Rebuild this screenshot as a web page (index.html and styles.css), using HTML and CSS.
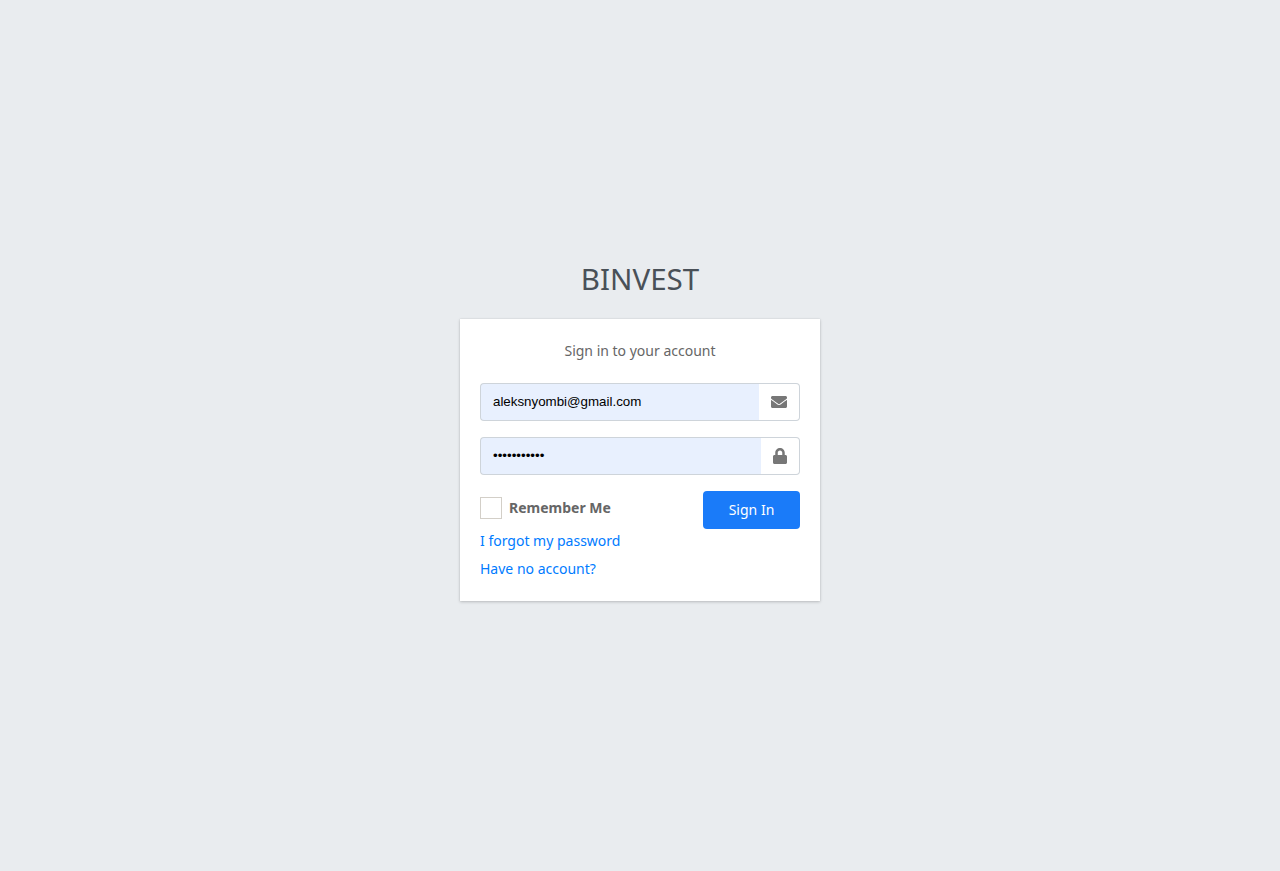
FILE: index.html
```html
<!DOCTYPE html>
<html lang="en">
<head>
    <meta charset="UTF-8">
    <meta name="viewport" content="width=device-width, initial-scale=1.0">
    <title>BINVEST | Log in</title>
    <link rel="stylesheet" href="styles.css">
</head>
<body class="login-page">
    <div class="login-box">
        <div class="login-logo">BINVEST</div>

        <div class="card">
            <p class="login-box-msg">Sign in to your account</p>

            <form>
                <div class="input-group">
                    <input type="email" class="form-control" value="aleksnyombi@gmail.com">
                    <div class="input-group-text">
                        <svg class="icon-envelope" viewBox="0 0 512 512"><path d="M502.3 190.8c3.9-3.1 9.7-.2 9.7 4.7V400c0 26.5-21.5 48-48 48H48c-26.5 0-48-21.5-48-48V195.6c0-5 5.7-7.8 9.7-4.7 22.4 17.4 52.1 39.5 154.1 113.6 21.1 15.4 56.7 47.8 92.2 47.6 35.7.3 72-32.8 92.3-47.6 102-74.1 131.6-96.3 154-113.7zM256 320c23.2.4 56.6-29.2 73.4-41.4 132.7-96.3 142.8-104.7 173.4-128.7 5.8-4.5 9.2-11.5 9.2-18.9v-19c0-26.5-21.5-48-48-48H48C21.5 64 0 85.5 0 112v19c0 7.4 3.4 14.3 9.2 18.9 30.6 23.9 40.7 32.4 173.4 128.7 16.8 12.2 50.2 41.8 73.4 41.4z"/></svg>
                    </div>
                </div>

                <div class="input-group">
                    <input type="password" class="form-control" value="aleks123456">
                    <div class="input-group-text">
                        <svg class="icon-lock" viewBox="0 0 448 512"><path d="M400 224h-24v-72C376 68.2 307.8 0 224 0S72 68.2 72 152v72H48c-26.5 0-48 21.5-48 48v192c0 26.5 21.5 48 48 48h352c26.5 0 48-21.5 48-48V272c0-26.5-21.5-48-48-48zm-104 0H152v-72c0-39.7 32.3-72 72-72s72 32.3 72 72v72z"/></svg>
                    </div>
                </div>

                <div class="form-row">
                    <label class="remember">
                        <span class="check-box"></span>
                        <span>Remember Me</span>
                    </label>
                    <button type="button" class="btn-primary">Sign In</button>
                </div>
            </form>

            <p class="link-line"><a href="#">I forgot my password</a></p>
            <p class="link-line"><a href="#">Have no account?</a></p>
        </div>
    </div>
</body>
</html>
```

FILE: styles.css
```css
* {
    box-sizing: border-box;
    margin: 0;
    padding: 0;
}

body {
    font-family: "Noto Sans", "Open Sans", sans-serif;
    font-size: 14px;
    line-height: 24px;
    color: #212529;
}

.login-page {
    background-color: #e9ecef;
    height: 100vh;
    display: flex;
    flex-direction: column;
    align-items: center;
    justify-content: center;
}

.login-box {
    width: 360px;
}

.login-logo {
    font-size: 29.5px;
    line-height: 50.4px;
    text-align: center;
    color: #495057;
    margin-bottom: 14.4px;
}

.card {
    background-color: #fff;
    box-shadow: 0 0 1px rgba(0, 0, 0, .125), 0 1px 3px rgba(0, 0, 0, .2);
    padding: 20px;
    margin-bottom: 16px;
}

.login-box-msg {
    text-align: center;
    color: #666;
    padding-bottom: 20px;
}

.input-group {
    display: flex;
    height: 38px;
    margin-bottom: 16px;
}

.form-control {
    flex: 1;
    min-width: 0;
    height: 38px;
    padding: 0 12px;
    font-family: "Liberation Sans", Arial, sans-serif;
    font-size: 13.33px;
    color: #000;
    background-color: #e8f0fe;
    border: 1px solid #ced4da;
    border-right: 0;
    border-radius: 4px 0 0 4px;
    outline: none;
}

.input-group-text {
    display: flex;
    align-items: center;
    padding: 0 12px;
    background-color: #fff;
    border: 1px solid #ced4da;
    border-left: 0;
    border-radius: 0 4px 4px 0;
}

.input-group-text svg {
    display: block;
    height: 16px;
    fill: #777;
}

.icon-envelope {
    width: 16px;
}

.icon-lock {
    width: 14px;
}

.form-row {
    display: flex;
    justify-content: space-between;
}

.remember {
    display: flex;
    align-items: center;
    gap: 7px;
    height: 34px;
    font-weight: 700;
    color: #666;
}

.check-box {
    width: 22px;
    height: 22px;
    background-color: #fff;
    border: 1px solid #d3cfc8;
}

.btn-primary {
    width: 97px;
    height: 38px;
    font-family: inherit;
    font-size: 14px;
    color: #fff;
    background-color: #1a7bf9;
    border: 0;
    border-radius: 4px;
}

.link-line + .link-line {
    margin-top: 4px;
}

a {
    color: #007bff;
    text-decoration: none;
}
```
